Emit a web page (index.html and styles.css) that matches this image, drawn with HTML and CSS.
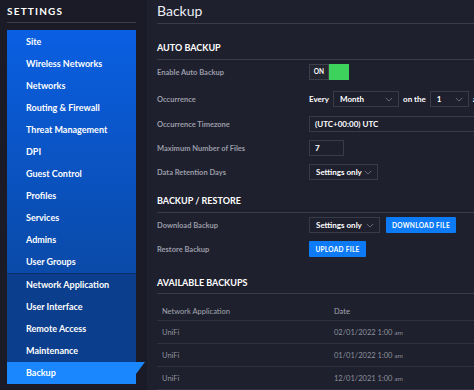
FILE: index.html
```html
<!DOCTYPE html>
<html>
<head>
<meta charset="utf-8">
<link rel="stylesheet" href="styles.css">
</head>
<body>
<div class="app">
  <aside class="sidebar">
    <div class="side-title">SETTINGS</div>
    <nav class="panel">
      <div class="group group-a">
        <div class="item">Site</div>
        <div class="item">Wireless Networks</div>
        <div class="item">Networks</div>
        <div class="item">Routing &amp; Firewall</div>
        <div class="item">Threat Management</div>
        <div class="item">DPI</div>
        <div class="item">Guest Control</div>
        <div class="item">Profiles</div>
        <div class="item">Services</div>
        <div class="item">Admins</div>
        <div class="item">User Groups</div>
      </div>
      <div class="group group-b">
        <div class="item">Network Application</div>
        <div class="item">User Interface</div>
        <div class="item">Remote Access</div>
        <div class="item">Maintenance</div>
        <div class="item active">Backup</div>
      </div>
    </nav>
  </aside>
  <main class="main">
    <h1 class="page-title">Backup</h1>

    <h2 class="sec sec-auto">AUTO BACKUP</h2>
    <div class="row row-first">
      <div class="label">Enable Auto Backup</div>
      <div class="ctrl">
        <div class="toggle"><span class="toggle-on">ON</span><span class="toggle-knob"></span></div>
      </div>
    </div>
    <div class="row row-occ">
      <div class="label">Occurrence</div>
      <div class="ctrl">
        <span class="txt">Every</span>
        <div class="select w-month"><span>Month</span><svg class="chev" viewBox="0 0 10 6"><path d="M1 1 L5 5 L9 1"/></svg></div>
        <span class="txt">on the</span>
        <div class="select w-day"><span>1</span><svg class="chev" viewBox="0 0 10 6"><path d="M1 1 L5 5 L9 1"/></svg></div>
        <span class="txt">at</span>
      </div>
    </div>
    <div class="row row-tz">
      <div class="label">Occurrence Timezone</div>
      <div class="ctrl">
        <div class="input w-tz">(UTC+00:00) UTC</div>
      </div>
    </div>
    <div class="row">
      <div class="label">Maximum Number of Files</div>
      <div class="ctrl">
        <div class="input w-num">7</div>
      </div>
    </div>
    <div class="row">
      <div class="label">Data Retention Days</div>
      <div class="ctrl">
        <div class="select w-set"><span>Settings only</span><svg class="chev" viewBox="0 0 10 6"><path d="M1 1 L5 5 L9 1"/></svg></div>
      </div>
    </div>

    <h2 class="sec sec-restore">BACKUP / RESTORE</h2>
    <div class="row">
      <div class="label">Download Backup</div>
      <div class="ctrl">
        <div class="select w-set2"><span>Settings only</span><svg class="chev" viewBox="0 0 10 6"><path d="M1 1 L5 5 L9 1"/></svg></div>
        <button class="btn w-dl">DOWNLOAD FILE</button>
      </div>
    </div>
    <div class="row">
      <div class="label">Restore Backup</div>
      <div class="ctrl">
        <button class="btn w-ul">UPLOAD FILE</button>
      </div>
    </div>

    <h2 class="sec sec-avail">AVAILABLE BACKUPS</h2>
    <div class="table">
      <div class="tr th">
        <div class="c1">Network Application</div>
        <div class="c2">Date</div>
      </div>
      <div class="tr">
        <div class="c1">UniFi</div>
        <div class="c2">02/01/2022 1:00 <small>am</small></div>
      </div>
      <div class="tr">
        <div class="c1">UniFi</div>
        <div class="c2">01/01/2022 1:00 <small>am</small></div>
      </div>
      <div class="tr">
        <div class="c1">UniFi</div>
        <div class="c2">12/01/2021 1:00 <small>am</small></div>
      </div>
    </div>
  </main>
</div>
</body>
</html>
```

FILE: styles.css
```css
* { box-sizing: border-box; }
html, body {
  margin: 0;
  padding: 0;
  background: #1e202e;
  font-family: "Lato", "Open Sans", sans-serif;
  color: #ffffff;
  width: 474px;
  height: 390px;
  overflow: hidden;
}
.app {
  display: flex;
  height: 390px;
}
.sidebar {
  width: 147px;
  flex: none;
  background: #1a1b26;
  padding-left: 7px;
  padding-right: 11px;
}
.side-title {
  height: 23px;
  border-bottom: 1px solid #3a3c4a;
  font-weight: 700;
  font-size: 10px;
  letter-spacing: 1.2px;
  line-height: 23px;
  color: #ffffff;
}
.panel {
  margin-top: 7px;
}
.group-a {
  background: linear-gradient(#0a5fe2, #0a4aa8);
  padding-top: 1px;
  border-bottom: 1px solid #0a2f6a;
}
.group-b {
  background: #0b3e8c;
}
.item {
  height: 22px;
  line-height: 22px;
  padding-left: 19px;
  font-size: 9px;
  font-weight: 700;
  color: #ffffff;
  white-space: nowrap;
}
.item.active {
  position: relative;
  background: #1a87ff;
}
.item.active::after {
  content: "";
  position: absolute;
  right: -9px;
  top: 0;
  width: 0;
  height: 0;
  border-top: 12px solid #1a87ff;
  border-right: 9px solid transparent;
}
.main {
  flex: 1;
  padding-left: 10px;
  overflow: hidden;
}
.page-title {
  margin: 0;
  height: 24px;
  border-bottom: 1px solid #3a3c4c;
  font-size: 14px;
  font-weight: 400;
  line-height: 21px;
  color: #eceef4;
}
.sec {
  margin: 0;
  font-size: 9px;
  font-weight: 700;
  line-height: 12px;
  border-bottom: 1px solid #3a3c4c;
  color: #ffffff;
}
.sec-auto { padding-top: 18px; padding-bottom: 5px; }
.sec-restore { padding-top: 11px; padding-bottom: 5px; }
.sec-avail { padding-top: 16px; padding-bottom: 4px; }
.row {
  display: flex;
  align-items: center;
  height: 24px;
}
.row-occ { margin-top: 3px; }
.row-tz { margin-top: 1px; }
.label {
  width: 152px;
  flex: none;
  font-size: 7.5px;
  font-weight: 700;
  color: #9b9da8;
}
.ctrl {
  display: flex;
  align-items: center;
  gap: 4px;
  white-space: nowrap;
}
.txt {
  font-size: 8px;
  font-weight: 700;
  color: #ffffff;
}
.toggle {
  display: flex;
  height: 16px;
}
.toggle-on {
  width: 20px;
  border: 1px solid #3e404e;
  background: #23252f;
  font-size: 6.5px;
  font-weight: 700;
  line-height: 14px;
  text-align: center;
  color: #ffffff;
}
.toggle-knob {
  width: 20px;
  background: #3dd25c;
}
.select, .input {
  height: 16px;
  border: 1px solid #393b49;
  background: #1e202e;
  display: flex;
  align-items: center;
  justify-content: space-between;
  padding: 0 5px 0 6px;
  font-size: 8px;
  font-weight: 700;
  color: #ffffff;
}
.input { justify-content: flex-start; padding-left: 5px; }
.chev {
  width: 8px;
  height: 5px;
  fill: none;
  stroke: #7e808c;
  stroke-width: 1;
}
.w-month { width: 66px; }
.w-day { width: 39px; }
.w-tz { width: 180px; }
.w-num { width: 35px; }
.w-set { width: 69px; }
.w-set2 { width: 71px; margin-right: 2px; }
.btn {
  height: 16px;
  border: 0;
  border-radius: 1px;
  background: #0c7bf5;
  color: #ffffff;
  font-family: "Lato", "Open Sans", sans-serif;
  font-size: 6.5px;
  font-weight: 700;
  letter-spacing: 0.3px;
  padding: 0;
}
.w-dl { width: 70px; }
.w-ul { width: 57px; }
.tr {
  display: flex;
  align-items: center;
  height: 23px;
  border-bottom: 1px solid #2f3141;
  font-size: 7.5px;
  color: #8f919c;
}
.tr.th {
  height: 27px;
  padding-top: 8px;
  color: #a4a6b0;
}
.c1 { width: 177px; padding-left: 5px; }
.c2 { flex: 1; }
.c2 small { font-size: 6.5px; }
```
